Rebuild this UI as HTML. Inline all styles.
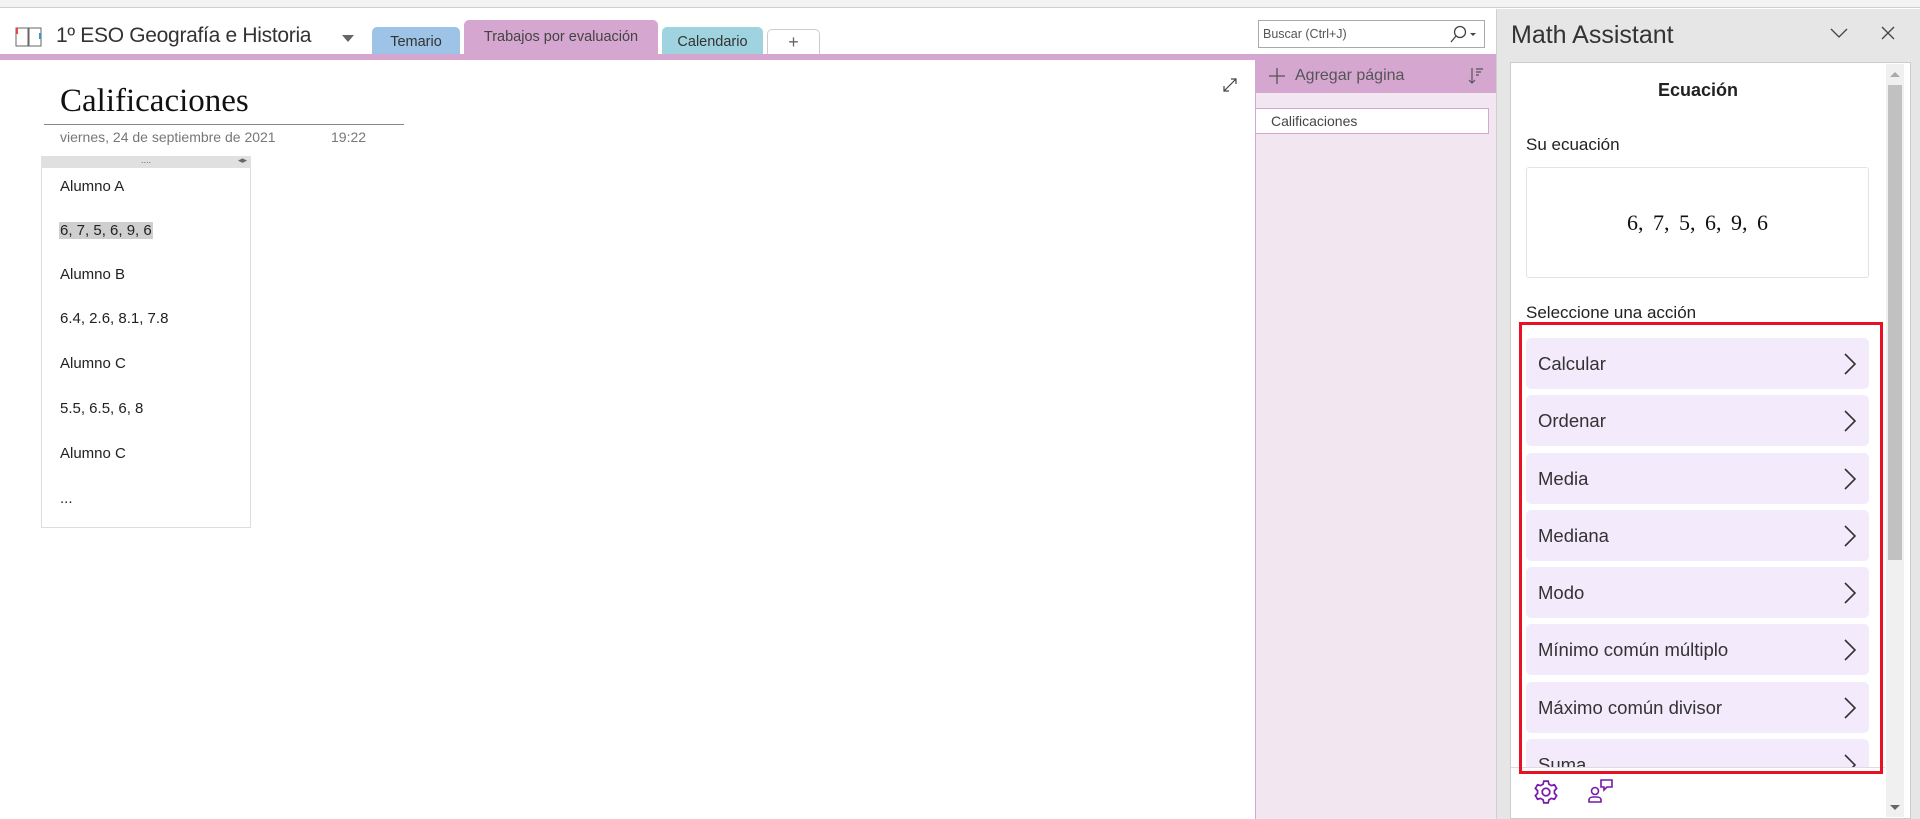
<!DOCTYPE html>
<html><head><meta charset="utf-8"><style>
*{margin:0;padding:0;box-sizing:border-box}
body{width:1920px;height:819px;overflow:hidden;background:#fff;font-family:"Liberation Sans",sans-serif;position:relative}
.a{position:absolute}
.item{position:absolute;left:1526px;width:343px;height:51px;background:#f3eafb;border-radius:5px;font-size:18.5px;color:#333;padding-left:12px;line-height:51px}
.item svg{position:absolute;right:12px;top:14px}
.ln{position:absolute;left:60px;font-size:15px;color:#222}
</style></head><body>
<div class="a" style="left:0;top:0;width:1920px;height:8px;background:#f3f3f3;border-bottom:1px solid #d0d0d0"></div>
<svg class="a" style="left:15px;top:27px" width="28" height="20" viewBox="0 0 28 20"><rect x="1" y="1" width="12" height="18" fill="#fff" stroke="#666"/><rect x="14" y="1" width="12" height="18" fill="#fff" stroke="#666"/><rect x="1" y="1" width="2" height="6" fill="#e44"/><rect x="24" y="6" width="2" height="6" fill="#39c"/></svg>
<div class="a" style="left:56px;top:24px;font-size:21px;color:#333;letter-spacing:-0.3px">1º ESO Geografía e Historia</div>
<div class="a" style="left:342px;top:35px;width:0;height:0;border-left:6px solid transparent;border-right:6px solid transparent;border-top:7px solid #666"></div>
<div class="a" style="left:372px;top:27px;width:88px;height:28px;background:#9dc3e6;border-radius:5px 5px 0 0;font-size:14.5px;color:#333;text-align:center;line-height:30px">Temario</div>
<div class="a" style="left:464px;top:20px;width:194px;height:35px;background:#d5a6d0;border-radius:5px 5px 0 0;font-size:14.5px;color:#444;text-align:center;line-height:34px">Trabajos por evaluación</div>
<div class="a" style="left:662px;top:27px;width:101px;height:28px;background:#9fd3df;border-radius:5px 5px 0 0;font-size:14.5px;color:#333;text-align:center;line-height:30px">Calendario</div>
<div class="a" style="left:767px;top:29px;width:53px;height:26px;background:#fff;border:1px solid #ccc;border-bottom:none;border-radius:5px 5px 0 0;font-size:18px;color:#666;text-align:center;line-height:24px">+</div>
<div class="a" style="left:0;top:54px;width:1496px;height:6px;background:#d5a6d0"></div>
<div class="a" style="left:1258px;top:20px;width:227px;height:28px;border:1px solid #aaa;background:#fff;font-size:12.5px;color:#555;padding:6px 0 0 4px">Buscar (Ctrl+J)</div>
<svg class="a" style="left:1448px;top:24px" width="30" height="20" viewBox="0 0 30 20"><circle cx="12" cy="8" r="5.5" fill="none" stroke="#444" stroke-width="1.3"/><line x1="8" y1="12" x2="3" y2="18" stroke="#444" stroke-width="1.3"/><path d="M22 9h6l-3 3z" fill="#444"/></svg>
<svg class="a" style="left:1222px;top:77px" width="16" height="16" viewBox="0 0 16 16" fill="none" stroke="#444" stroke-width="1.2"><path d="M2 14L14 2M9 2h5v5M2 9v5h5"/></svg>
<div class="a" style="left:60px;top:83px;font-family:'Liberation Serif',serif;font-size:33px;color:#111">Calificaciones</div>
<div class="a" style="left:44px;top:124px;width:360px;height:1px;background:#888"></div>
<div class="a" style="left:60px;top:129px;font-size:14px;color:#777">viernes, 24 de septiembre de 2021</div>
<div class="a" style="left:331px;top:129px;font-size:14px;color:#777">19:22</div>
<div class="a" style="left:41px;top:156px;width:210px;height:372px;border:1px solid #ddd"></div>
<div class="a" style="left:41px;top:156px;width:210px;height:12px;background:#e0e0e0;font-size:9px;color:#666;text-align:center;line-height:8px">....<span style="position:absolute;right:4px">◂▸</span></div>
<div class="ln" style="top:178px">Alumno A</div>
<div class="ln" style="top:222px;background:#cfcfcf;padding:0 1px;left:59px">6, 7, 5, 6, 9, 6</div>
<div class="ln" style="top:266px">Alumno B</div>
<div class="ln" style="top:310px">6.4, 2.6, 8.1, 7.8</div>
<div class="ln" style="top:355px">Alumno C</div>
<div class="ln" style="top:400px">5.5, 6.5, 6, 8</div>
<div class="ln" style="top:445px">Alumno C</div>
<div class="ln" style="top:490px">...</div>
<div class="a" style="left:1255px;top:60px;width:241px;height:759px;background:#f2e6f0;border-left:1px solid #d5a6d0"></div>
<div class="a" style="left:1255px;top:60px;width:241px;height:33px;background:#d5a6d0"></div>
<svg class="a" style="left:1268px;top:67px" width="18" height="18"><path d="M9 1v16M1 9h16" stroke="#555" stroke-width="1.3"/></svg>
<div class="a" style="left:1295px;top:67px;font-size:16px;color:#555">Agregar página</div>
<svg class="a" style="left:1468px;top:66px" width="16" height="20" fill="none" stroke="#555" stroke-width="1.2"><path d="M4 2v15M1 14l3 3 3-3M8 3h7M8 6h5M8 9h3"/></svg>
<div class="a" style="left:1255px;top:108px;width:234px;height:26px;background:#fff;border:1px solid #d5a6d0;font-size:14px;color:#444;padding:4px 0 0 15px">Calificaciones</div>
<div class="a" style="left:1496px;top:9px;width:424px;height:810px;background:#e6e6e6;border-left:1px solid #d0d0d0"></div>
<div class="a" style="left:1511px;top:21px;font-size:25px;color:#333">Math Assistant</div>
<svg class="a" style="left:1829px;top:26px" width="20" height="14" fill="none" stroke="#444" stroke-width="1.3"><path d="M2 3l8 8 8-8"/></svg>
<svg class="a" style="left:1880px;top:25px" width="16" height="16" fill="none" stroke="#444" stroke-width="1.3"><path d="M2 2l12 12M14 2L2 14"/></svg>
<div class="a" style="left:1510px;top:62px;width:401px;height:757px;background:#fff;border:1px solid #ccc"></div>
<div class="a" style="left:1886px;top:64px;width:18px;height:753px;background:#f0f0f0"></div>
<div class="a" style="left:1888px;top:85px;width:14px;height:475px;background:#c1c1c1"></div>
<div class="a" style="left:1890px;top:72px;border-left:5px solid transparent;border-right:5px solid transparent;border-bottom:5px solid #aaa"></div>
<div class="a" style="left:1890px;top:805px;border-left:5px solid transparent;border-right:5px solid transparent;border-top:5px solid #666"></div>
<div class="a" style="left:1511px;top:80px;width:374px;text-align:center;font-size:18px;font-weight:bold;color:#222">Ecuación</div>
<div class="a" style="left:1526px;top:135px;font-size:17px;color:#222">Su ecuación</div>
<div class="a" style="left:1526px;top:167px;width:343px;height:111px;border:1px solid #e3e3e3;border-radius:3px;font-family:'Liberation Serif',serif;font-size:22px;text-align:center;line-height:110px;color:#111;word-spacing:4px">6, 7, 5, 6, 9, 6</div>
<div class="a" style="left:1526px;top:303px;font-size:17px;color:#222">Seleccione una acción</div>
<div class="a" style="left:1511px;top:322px;width:374px;height:445px;overflow:hidden">
<div style="position:absolute;left:-1511px;top:-322px;width:1920px;height:819px">
<div class="item" style="top:338px">Calcular<svg width="14" height="24" fill="none" stroke="#333" stroke-width="1.6"><path d="M2 2l10 10-10 10"/></svg></div>
<div class="item" style="top:395px">Ordenar<svg width="14" height="24" fill="none" stroke="#333" stroke-width="1.6"><path d="M2 2l10 10-10 10"/></svg></div>
<div class="item" style="top:453px">Media<svg width="14" height="24" fill="none" stroke="#333" stroke-width="1.6"><path d="M2 2l10 10-10 10"/></svg></div>
<div class="item" style="top:510px">Mediana<svg width="14" height="24" fill="none" stroke="#333" stroke-width="1.6"><path d="M2 2l10 10-10 10"/></svg></div>
<div class="item" style="top:567px">Modo<svg width="14" height="24" fill="none" stroke="#333" stroke-width="1.6"><path d="M2 2l10 10-10 10"/></svg></div>
<div class="item" style="top:624px">Mínimo común múltiplo<svg width="14" height="24" fill="none" stroke="#333" stroke-width="1.6"><path d="M2 2l10 10-10 10"/></svg></div>
<div class="item" style="top:682px">Máximo común divisor<svg width="14" height="24" fill="none" stroke="#333" stroke-width="1.6"><path d="M2 2l10 10-10 10"/></svg></div>
<div class="item" style="top:739px">Suma<svg width="14" height="24" fill="none" stroke="#333" stroke-width="1.6"><path d="M2 2l10 10-10 10"/></svg></div>
</div></div>
<div class="a" style="left:1511px;top:767px;width:374px;height:1px;background:#ddd"></div>
<div class="a" style="left:1519px;top:322px;width:364px;height:452px;border:3px solid #e81123"></div>
<svg class="a" style="left:1533px;top:779px" width="26" height="26" viewBox="0 0 24 24" fill="none" stroke="#7719aa" stroke-width="1.6"><circle cx="12" cy="12" r="3.5"/><path d="M10 2h4l.7 2.8 2.3 1.3 2.8-.8 2 3.4-2 2v2.6l2 2-2 3.4-2.8-.8-2.3 1.3L14 22h-4l-.7-2.8-2.3-1.3-2.8.8-2-3.4 2-2v-2.6l-2-2 2-3.4 2.8.8 2.3-1.3z"/></svg>
<svg class="a" style="left:1587px;top:778px" width="28" height="26" viewBox="0 0 28 26" fill="none" stroke="#7719aa" stroke-width="1.6"><circle cx="8" cy="13" r="3.5"/><path d="M2 24v-2c0-2 2-3 4-3h4c2 0 4 1 4 3v2z"/><path d="M14 2h11v7h-5l-3 3v-3h-3z"/></svg>
</body></html>
